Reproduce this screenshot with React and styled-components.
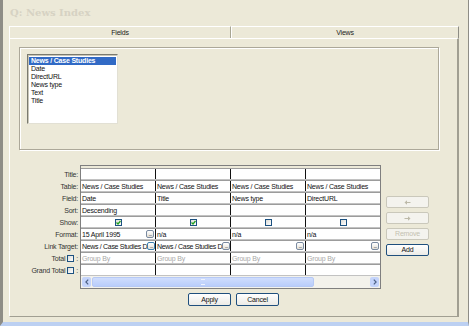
import React from 'react';
import styled, { createGlobalStyle } from 'styled-components';

const GlobalStyle = createGlobalStyle`
  html, body {
    margin: 0;
    padding: 0;
    background: #ece9d8;
  }
  body {
    font-family: "Liberation Sans", Arial, sans-serif;
  }
`;

const columns = [
  { table: 'News / Case Studies', field: 'Date', sort: 'Descending', show: true, format: '15 April 1995', formatButton: true, link: 'News / Case Studies D', focused: true },
  { table: 'News / Case Studies', field: 'Title', sort: '', show: true, format: 'n/a', formatButton: false, link: 'News / Case Studies D' },
  { table: 'News / Case Studies', field: 'News type', sort: '', show: false, format: 'n/a', formatButton: false, link: '' },
  { table: 'News / Case Studies', field: 'DirectURL', sort: '', show: false, format: 'n/a', formatButton: false, link: '' },
];

const listItems = ['News / Case Studies', 'Date', 'DirectURL', 'News type', 'Text', 'Title'];

const Arrow = ({ left }) => (
  <svg width="7" height="5" viewBox="0 0 7 5">
    {left ? (
      <>
        <path d="M0.5 2.5 L3 0.3 L3 4.7 Z" fill="#bdbaa9" />
        <path d="M3 2.5 H6.5" stroke="#bdbaa9" strokeWidth="1" />
      </>
    ) : (
      <>
        <path d="M6.5 2.5 L4 0.3 L4 4.7 Z" fill="#bdbaa9" />
        <path d="M0.5 2.5 H4" stroke="#bdbaa9" strokeWidth="1" />
      </>
    )}
  </svg>
);

const App = () => (
  <>
    <GlobalStyle />
    <Window>
      <Title>Q: News Index</Title>
      <TabStrip>
        <Tab width={222}>Fields</Tab>
        <Tab width={228} last>Views</Tab>
      </TabStrip>
      <Panel>
        <GroupBox>
          <ListBox>
            {listItems.map((item, i) => (
              <ListItem key={item} selected={i === 0}>{item}</ListItem>
            ))}
          </ListBox>
        </GroupBox>

        <LowerArea>
          <Labels>
            <Label>Title:</Label>
            <Label>Table:</Label>
            <Label>Field:</Label>
            <Label>Sort:</Label>
            <Label>Show:</Label>
            <Label>Format:</Label>
            <Label>Link Target:</Label>
            <Label>Total <Check /> :</Label>
            <Label>Grand Total <Check /> :</Label>
          </Labels>

          <GridFrame>
            <HeaderStrip />
            <Row>{columns.map((c, i) => <Cell key={i} last={i === 3} />)}</Row>
            <Row>{columns.map((c, i) => <Cell key={i} last={i === 3}>{c.table}</Cell>)}</Row>
            <Row>{columns.map((c, i) => <Cell key={i} last={i === 3}>{c.field}</Cell>)}</Row>
            <Row>{columns.map((c, i) => <Cell key={i} last={i === 3}>{c.sort}</Cell>)}</Row>
            <Row>
              {columns.map((c, i) => (
                <Cell key={i} last={i === 3} center>
                  <Check checked={c.show}>
                    {c.show && (
                      <svg width="5" height="5" viewBox="0 0 5 5">
                        <path d="M0.5 2.5 L2 4 L4.5 1" stroke="#21a121" strokeWidth="1.3" fill="none" />
                      </svg>
                    )}
                  </Check>
                </Cell>
              ))}
            </Row>
            <Row>
              {columns.map((c, i) => (
                <Cell key={i} last={i === 3}>
                  <CellText>{c.format}</CellText>
                  {c.formatButton && <DotButton>...</DotButton>}
                </Cell>
              ))}
            </Row>
            <Row>
              {columns.map((c, i) => (
                <Cell key={i} last={i === 3}>
                  <CellText tight>{c.link}</CellText>
                  <DotButton focused={c.focused}>...</DotButton>
                </Cell>
              ))}
            </Row>
            <Row>{columns.map((c, i) => <Cell key={i} last={i === 3} muted>Group By</Cell>)}</Row>
            <Row>{columns.map((c, i) => <Cell key={i} last={i === 3} />)}</Row>
            <ScrollBar>
              <ScrollArrow>
                <svg width="4" height="6" viewBox="0 0 4 6">
                  <path d="M3.2 0.6 L0.9 3 L3.2 5.4" stroke="#4d6185" strokeWidth="1.2" fill="none" />
                </svg>
              </ScrollArrow>
              <Thumb>
                <Grip />
              </Thumb>
              <Track />
              <ScrollArrow>
                <svg width="4" height="6" viewBox="0 0 4 6">
                  <path d="M0.8 0.6 L3.1 3 L0.8 5.4" stroke="#4d6185" strokeWidth="1.2" fill="none" />
                </svg>
              </ScrollArrow>
            </ScrollBar>
          </GridFrame>

          <SideButtons>
            <Button disabled><Arrow left /></Button>
            <Button disabled><Arrow /></Button>
            <Button disabled>Remove</Button>
            <Button>Add</Button>
          </SideButtons>
        </LowerArea>

        <Footer>
          <Button tall>Apply</Button>
          <Button tall>Cancel</Button>
        </Footer>
      </Panel>
    </Window>
  </>
);

const Window = styled.div`
  width: 469px;
  height: 326px;
  box-sizing: border-box;
  background: #ece9d8;
  border-left: 3px solid #8e8d86;
  border-right: 1px solid #8e8d86;
  border-bottom: 4px solid #bcd0f2;
  display: flex;
  flex-direction: column;
`;

const Title = styled.div`
  height: 26px;
  line-height: 26px;
  padding-left: 7px;
  font-family: "DejaVu Serif", "Liberation Serif", serif;
  font-weight: bold;
  font-size: 10px;
  color: #d6d2c3;
`;

const TabStrip = styled.div`
  display: flex;
  margin-left: 6px;
  height: 12px;
`;

const Tab = styled.div`
  width: ${p => p.width}px;
  box-sizing: border-box;
  border-top: 1px solid #ffffff;
  border-left: 1px solid #ffffff;
  border-right: 1px solid ${p => (p.last ? '#8d8c84' : '#a7a593')};
  font-size: 7px;
  letter-spacing: -0.2px;
  color: #222;
  text-align: center;
  line-height: 11px;
`;

const Panel = styled.div`
  margin-left: 6px;
  width: 450px;
  height: 279px;
  box-sizing: border-box;
  border-top: 1px solid #ffffff;
  border-left: 1px solid #ffffff;
  border-right: 2px solid #a19f92;
  border-bottom: 1px solid #a19f92;
  padding: 8px 0 0 9px;
  display: flex;
  flex-direction: column;
`;

const GroupBox = styled.div`
  width: 420px;
  height: 103px;
  box-sizing: border-box;
  border: 1px solid #aca899;
  box-shadow: inset 1px 1px 0 #ffffff, 1px 1px 0 #ffffff;
  padding: 6px 0 0 7px;
`;

const ListBox = styled.div`
  width: 91px;
  height: 70px;
  box-sizing: border-box;
  background: #ffffff;
  border: 1px solid #7a7a6f;
  border-right-color: #e2e0d4;
  border-bottom-color: #e2e0d4;
  box-shadow: inset 1px 1px 0 #c8c6b8;
  padding: 2px 1px;
`;

const ListItem = styled.div`
  height: 8px;
  line-height: 8px;
  font-size: 7px;
  letter-spacing: -0.2px;
  padding-left: 2px;
  white-space: nowrap;
  color: ${p => (p.selected ? '#ffffff' : '#111')};
  background: ${p => (p.selected ? '#316ac5' : 'transparent')};
  font-weight: ${p => (p.selected ? 'bold' : 'normal')};
`;

const LowerArea = styled.div`
  display: flex;
  margin-top: 15px;
  margin-left: -9px;
`;

const Labels = styled.div`
  width: 70px;
  box-sizing: border-box;
  padding-top: 3px;
  padding-right: 2px;
`;

const Label = styled.div`
  height: 12px;
  display: flex;
  align-items: center;
  justify-content: flex-end;
  gap: 2px;
  font-size: 7px;
  letter-spacing: -0.2px;
  color: #333;
  white-space: nowrap;
`;

const GridFrame = styled.div`
  width: 301px;
  box-sizing: border-box;
  border: 1px solid #7f7f7f;
  background: #ffffff;
`;

const HeaderStrip = styled.div`
  height: 2px;
  background: #ece9d8;
`;

const Row = styled.div`
  display: flex;
  height: 12px;
  box-sizing: border-box;
  border-top: 1px solid #9c9c9c;
  border-bottom: 1px solid #c2c2c2;
`;

const Cell = styled.div`
  width: ${p => (p.last ? 74 : 75)}px;
  box-sizing: border-box;
  border-right: ${p => (p.last ? 'none' : '1px solid #111')};
  display: flex;
  align-items: center;
  justify-content: ${p => (p.center ? 'center' : 'space-between')};
  padding-left: 1px;
  font-size: 7px;
  letter-spacing: -0.2px;
  color: ${p => (p.muted ? '#a8a8a8' : '#111')};
  white-space: nowrap;
  overflow: hidden;
`;

const CellText = styled.span`
  white-space: nowrap;
  letter-spacing: ${p => (p.tight ? '-0.32px' : '-0.2px')};
`;

const Check = styled.span`
  width: 7px;
  height: 7px;
  box-sizing: border-box;
  border: 1px solid #1c5180;
  background: linear-gradient(135deg, #dcdcd7, #ffffff);
  display: inline-flex;
  align-items: center;
  justify-content: center;
`;

const DotButton = styled.span`
  flex: none;
  width: 8px;
  height: 8px;
  box-sizing: border-box;
  margin-right: 1px;
  border: 1px solid ${p => (p.focused ? '#3c7fb1' : '#7a8aa0')};
  border-radius: 2px;
  background: linear-gradient(#ffffff, #e3e1d8);
  font-size: 6px;
  line-height: 6px;
  text-align: center;
  color: #222;
  letter-spacing: -0.7px;
  overflow: hidden;
`;

const ScrollBar = styled.div`
  display: flex;
  height: 12px;
  padding: 1px 0;
  box-sizing: border-box;
  background: #f3f2ec;
`;

const ScrollArrow = styled.div`
  width: 9px;
  flex: none;
  box-sizing: border-box;
  margin: 0 1px;
  border-radius: 2px;
  background: #c4d4fb;
  display: flex;
  align-items: center;
  justify-content: center;
`;

const Thumb = styled.div`
  width: 222px;
  flex: none;
  box-sizing: border-box;
  border: 1px solid #b6c9f5;
  border-radius: 2px;
  background: linear-gradient(#cfddfd, #b9cdfb);
  display: flex;
  align-items: center;
  justify-content: center;
`;

const Grip = styled.div`
  width: 4px;
  height: 4px;
  border-top: 1px solid #eef3fe;
  border-bottom: 1px solid #eef3fe;
`;

const Track = styled.div`
  flex: 1;
`;

const SideButtons = styled.div`
  display: flex;
  flex-direction: column;
  gap: 4px;
  margin-left: 5px;
  padding-top: 31px;
`;

const Button = styled.button`
  width: 43px;
  height: ${p => (p.tall ? 13 : 12)}px;
  padding: 0;
  box-sizing: border-box;
  border: 1px solid ${p => (p.disabled ? '#cac8bb' : '#1f4f7d')};
  border-radius: 2px;
  background: ${p => (p.disabled ? '#f4f3ee' : 'linear-gradient(#ffffff, #ecebe6)')};
  color: ${p => (p.disabled ? '#c4c1b1' : '#111')};
  font-family: "Liberation Sans", Arial, sans-serif;
  font-size: 7px;
  letter-spacing: -0.2px;
  line-height: 10px;
  display: flex;
  align-items: center;
  justify-content: center;
`;

const Footer = styled.div`
  display: flex;
  justify-content: center;
  gap: 5px;
  margin-top: 4px;
  margin-left: -9px;
`;

export default App;
